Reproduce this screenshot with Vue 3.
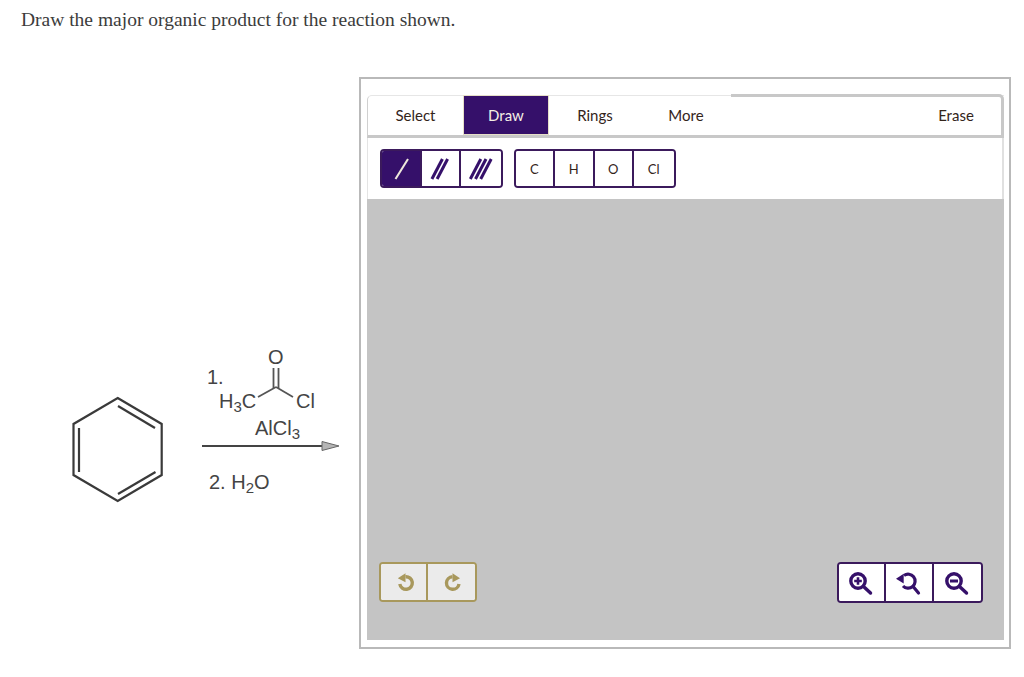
<template>
  <div class="page">
    <h1 class="question">Draw the major organic product for the reaction shown.</h1>
    <div class="workspace">
      <svg class="scheme" viewBox="0 77 359 572" width="359" height="572">
        <!-- benzene -->
        <g class="bond">
          <polygon points="117.7,398 161.7,424 161.7,475 117.7,501 73.5,475 73.5,424" />
          <line x1="118" y1="406" x2="155" y2="428" />
          <line x1="79" y1="428" x2="79" y2="472" />
          <line x1="118" y1="494" x2="155.5" y2="472" />
        </g>
        <!-- acetyl chloride -->
        <g class="bond thin">
          <line x1="273.5" y1="368" x2="273.5" y2="388" />
          <line x1="278.5" y1="368" x2="278.5" y2="388" />
          <line x1="258" y1="397" x2="276" y2="387" />
          <line x1="276" y1="387" x2="293" y2="397" />
        </g>
        <g class="chem">
          <text x="268" y="364">O</text>
          <text x="207" y="384">1.</text>
          <text x="219" y="408">H<tspan class="sub" dy="4">3</tspan><tspan dy="-4">C</tspan></text>
          <text x="296" y="408">Cl</text>
          <text x="255" y="435">AlCl<tspan class="sub" dy="4">3</tspan></text>
          <text x="209" y="489">2. H<tspan class="sub" dy="4">2</tspan><tspan dy="-4">O</tspan></text>
        </g>
        <line class="arrow-line" x1="202" y1="446" x2="324" y2="446" />
        <polygon class="arrow-head" points="322,441.5 339,446 322,450.5" />
      </svg>

      <div class="frame">
        <div class="tabs">
          <button
            v-for="tab in tabs"
            :key="tab.label"
            class="tab"
            :class="{ active: tab.label === 'Draw' }"
            :style="{ width: tab.width + 'px' }"
          >
            {{ tab.label }}
          </button>
          <div class="tab-rest">
            <button class="tab erase">Erase</button>
          </div>
        </div>

        <div class="tools">
          <div class="btn-group">
            <button v-for="(n, i) in bonds" :key="n" class="tool" :class="{ selected: i === 0 }">
              <svg width="26" height="26" viewBox="0 0 26 26">
                <line
                  v-for="off in bondOffsets(n)"
                  :key="off"
                  :x1="7.5 + off"
                  y1="23"
                  :x2="(i === 0 ? 20 : 18) + off"
                  y2="3"
                  :stroke="i === 0 ? '#efe9dc' : '#35106a'"
                  :stroke-width="i === 0 ? 2 : 3"
                />
              </svg>
            </button>
          </div>
          <div class="btn-group">
            <button v-for="atom in atoms" :key="atom" class="tool atom">{{ atom }}</button>
          </div>
        </div>

        <div class="canvas">
          <div class="btn-group history">
            <button class="tool">
              <svg width="22" height="22" viewBox="0 0 22 22" fill="none" stroke="#a8985c" stroke-width="3.4">
                <path d="M12.5 5.7A6.3 6.3 0 1 1 6.8 13" />
                <path d="M12.5 2.3v9L4.8 7.3z" fill="#a8985c" stroke="none" />
              </svg>
            </button>
            <button class="tool">
              <svg width="22" height="22" viewBox="0 0 22 22" fill="none" stroke="#a8985c" stroke-width="3.4">
                <path d="M11.5 5.7A6.3 6.3 0 1 0 18 13" />
                <path d="M11.5 2.3v9L19 7.3z" fill="#a8985c" stroke="none" />
              </svg>
            </button>
          </div>
          <div class="btn-group zoom">
            <button class="tool">
              <svg width="26" height="26" viewBox="0 0 26 26" fill="none" stroke="#35106a" stroke-width="3.4">
                <circle cx="10" cy="11" r="7.2" />
                <path d="M15.5 16.5l7 6.5" stroke-linecap="round" />
                <path d="M10 7.2v7.6M6.2 11h7.6" stroke-width="2.6" />
              </svg>
            </button>
            <button class="tool">
              <svg width="26" height="26" viewBox="0 0 26 26" fill="none" stroke="#35106a" stroke-width="3.2">
                <path d="M8 5.5A7 7 0 1 1 7 16" />
                <path d="M7.7 3.8v9.6L0 8.7z" fill="#35106a" stroke="none" />
                <path d="M17.5 17l5 6" stroke-linecap="round" />
              </svg>
            </button>
            <button class="tool">
              <svg width="26" height="26" viewBox="0 0 26 26" fill="none" stroke="#35106a" stroke-width="3.4">
                <circle cx="10" cy="11" r="7.2" />
                <path d="M15.5 16.5l7 6.5" stroke-linecap="round" />
                <path d="M6 11h8" stroke-width="3" />
              </svg>
            </button>
          </div>
        </div>
      </div>
    </div>
  </div>
</template>

<script setup>
const tabs = [
  { label: 'Select', width: 95 },
  { label: 'Draw', width: 86 },
  { label: 'Rings', width: 92 },
  { label: 'More', width: 90 }
]
const bonds = [1, 2, 3]
const atoms = ['C', 'H', 'O', 'Cl']

// spread the strokes of a double/triple bond around the middle
const bondOffsets = (n) => {
  const gap = 5.2
  return Array.from({ length: n }, (_, i) => (i - (n - 1) / 2) * gap)
}
</script>

<style scoped>
.page {
  width: 1024px;
  height: 677px;
  overflow: hidden;
  background: #fff;
}

.question {
  margin: 0;
  padding: 9px 0 0 21px;
  height: 77px;
  box-sizing: border-box;
  font-family: "Liberation Serif", serif;
  font-weight: 400;
  font-size: 19.5px;
  line-height: 22px;
  color: #3c3c3c;
}

.workspace {
  display: flex;
}

.scheme {
  flex: none;
  display: block;
}

.bond {
  fill: none;
  stroke: #3a3a3a;
  stroke-width: 2.2;
}

.bond.thin {
  stroke: #555;
  stroke-width: 1.8;
}

.chem text {
  font-family: "Liberation Sans", sans-serif;
  font-size: 20px;
  fill: #444;
}

.chem .sub {
  font-size: 15px;
}

.arrow-line {
  stroke: #444;
  stroke-width: 2;
}

.arrow-head {
  fill: #b5b5b5;
  stroke: #666;
  stroke-width: 1;
}

.frame {
  width: 652px;
  height: 572px;
  box-sizing: border-box;
  border: 2px solid #b9b9b9;
  padding: 16px 5px 7px 6px;
  display: flex;
  flex-direction: column;
}

button {
  font-family: Lato, sans-serif;
  background: none;
  border: 0;
  padding: 0;
  margin: 0;
}

.tabs {
  display: flex;
  height: 43px;
  box-sizing: border-box;
  border-bottom: 3px solid #c8c8c8;
  border-left: 1px solid #d0d0d0;
  border-top: 1px solid #e6e6e6;
  border-radius: 5px 0 0 0;
  flex: none;
}

.tab {
  font-size: 15px;
  color: #33241a;
  flex: none;
  padding-bottom: 1px;
}

.tab.active {
  background: #35106a;
  color: #f4efe4;
  border: 1px solid #e6dfc8;
  margin-top: -1px;
  height: 40px;
}

.tab-rest {
  flex: 1;
  display: flex;
  justify-content: flex-end;
  border-top: 3px solid #c8c8c8;
  border-right: 3px solid #c8c8c8;
  border-radius: 0 5px 0 0;
  margin-top: -2px;
  margin-bottom: -3px;
  border-bottom: 3px solid #c8c8c8;
}

.tab.erase {
  width: 92px;
  padding-left: 2px;
  padding-bottom: 2px;
}

.tools {
  flex: none;
  height: 61px;
  box-sizing: border-box;
  display: flex;
  gap: 11px;
  padding: 11px 0 0 12px;
  border-left: 1px solid #e4e4e4;
  border-right: 2px solid #e0e0e0;
}

.btn-group {
  display: flex;
  height: 39px;
  box-sizing: border-box;
  border: 2px solid #3b1a5c;
  border-radius: 4px;
  overflow: hidden;
  background: #fff;
  flex: none;
}

.tool {
  width: 39.5px;
  height: 100%;
  display: flex;
  align-items: center;
  justify-content: center;
  border-right: 2px solid #3b1a5c;
  background: #fff;
}

.tool:last-child {
  border-right: 0;
}

.tool.selected {
  background: #35106a;
}

.tool.atom {
  width: 39.5px;
  font-size: 13px;
  color: #33241a;
}

.canvas {
  flex: 1;
  background: #c4c4c4;
  display: flex;
  align-items: flex-end;
  justify-content: space-between;
  padding: 0 21px 38px 12px;
}

.history {
  border-color: #a8985c;
  height: 40px;
}

.history .tool {
  width: 47px;
  background: #ebebeb;
  border-right-color: #a8985c;
}

.zoom {
  height: 41px;
  margin-bottom: -1px;
}

.zoom .tool {
  width: 47.5px;
}
</style>
